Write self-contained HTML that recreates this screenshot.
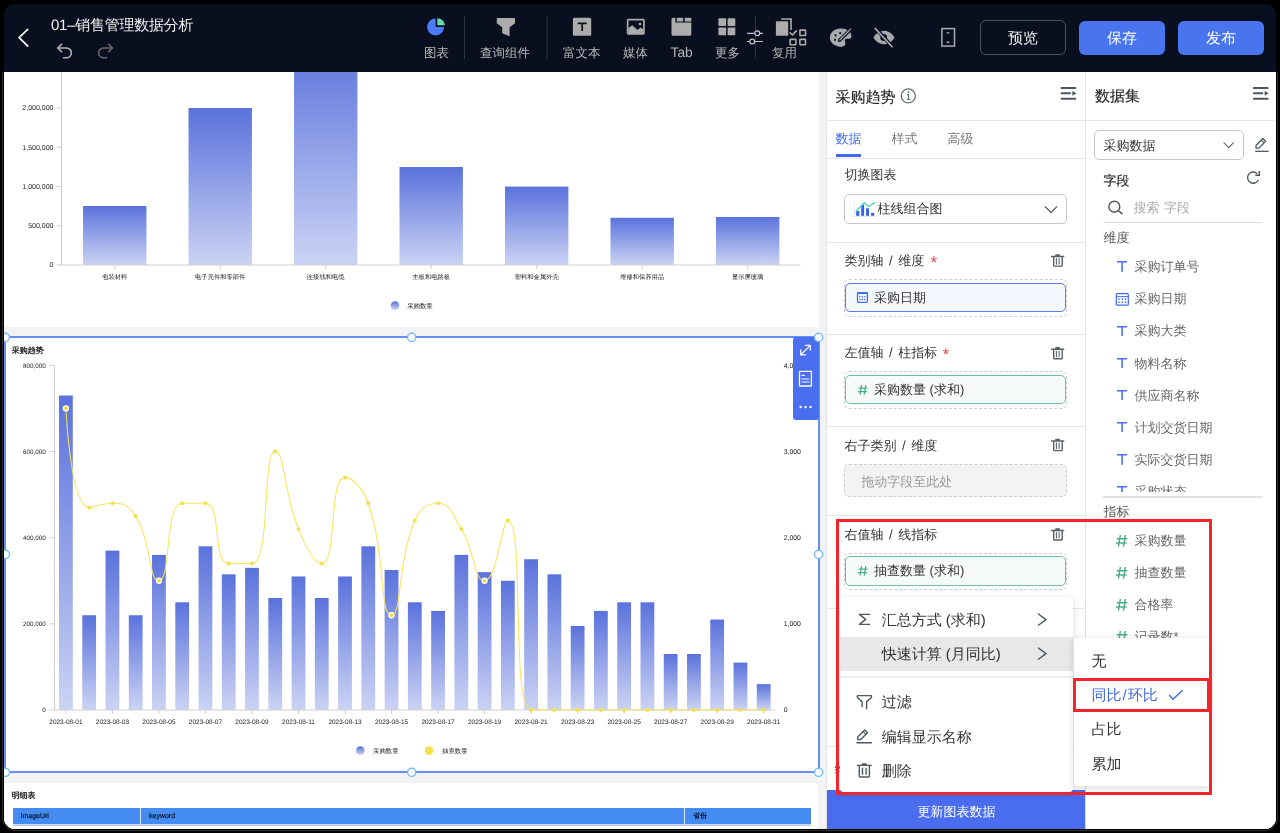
<!DOCTYPE html>
<html><head><meta charset="utf-8">
<style>
html,body{margin:0;padding:0;background:#000;width:1280px;height:833px;overflow:hidden}
body{font-family:"Liberation Sans",sans-serif;position:relative;text-rendering:geometricPrecision}
.abs{position:absolute}
#frame{position:absolute;left:4px;top:3.6px;width:1271.7px;height:825.2px;border-radius:11px;overflow:hidden;background:linear-gradient(#0a0f1f 0,#0a0f1f 60px,#fff 60px)}
#app{position:absolute;left:-4px;top:-3.6px;width:1280px;height:833px;will-change:transform}
.txt{position:absolute;white-space:nowrap;line-height:1}
</style></head><body>
<div id="frame"><div id="app">

  <!-- canvas -->
  <div class="abs" style="left:0;top:71.5px;width:826px;height:762px;background:#f2f3f5"></div>
  <div class="abs" style="left:0;top:71.5px;width:819px;height:255.5px;background:#fff"></div>
  <div class="abs" style="left:0;top:337px;width:819px;height:436px;background:#fff"></div>
  <div class="abs" style="left:0;top:782.5px;width:818px;height:60px;background:#fff"></div>
  <div class="abs" style="left:826px;top:71.5px;width:1px;height:762px;background:#e3e3e3"></div>

  <svg class="abs" style="left:0;top:0" width="1280" height="833" viewBox="0 0 1280 833">
<defs>
<linearGradient id="g1" x1="0" y1="0" x2="0" y2="1"><stop offset="0" stop-color="#5a72dc"/><stop offset="1" stop-color="#cbd3f4"/></linearGradient>
<linearGradient id="g2" x1="0" y1="0" x2="0" y2="1"><stop offset="0" stop-color="#5a72dc"/><stop offset="1" stop-color="#cbd3f4"/></linearGradient>
</defs>
<g font-family='"Liberation Sans", sans-serif' text-rendering='geometricPrecision'>
<line x1="56.5" y1="265.0" x2="62" y2="265.0" stroke="#cfcfcf" stroke-width="1"/><text x="53.5" y="267.4" font-size="7" fill="#222" font-weight="normal" text-anchor="end" >0</text><line x1="56.5" y1="225.75" x2="62" y2="225.75" stroke="#cfcfcf" stroke-width="1"/><text x="53.5" y="228.15" font-size="7" fill="#222" font-weight="normal" text-anchor="end" >500,000</text><line x1="56.5" y1="186.5" x2="62" y2="186.5" stroke="#cfcfcf" stroke-width="1"/><text x="53.5" y="188.9" font-size="7" fill="#222" font-weight="normal" text-anchor="end" >1,000,000</text><line x1="56.5" y1="147.25" x2="62" y2="147.25" stroke="#cfcfcf" stroke-width="1"/><text x="53.5" y="149.65" font-size="7" fill="#222" font-weight="normal" text-anchor="end" >1,500,000</text><line x1="56.5" y1="108.0" x2="62" y2="108.0" stroke="#cfcfcf" stroke-width="1"/><text x="53.5" y="110.4" font-size="7" fill="#222" font-weight="normal" text-anchor="end" >2,000,000</text><line x1="56.5" y1="68.75" x2="62" y2="68.75" stroke="#cfcfcf" stroke-width="1"/><text x="53.5" y="71.15" font-size="7" fill="#222" font-weight="normal" text-anchor="end" >2,500,000</text><line x1="61.5" y1="60" x2="61.5" y2="265" stroke="#cdcdcd" stroke-width="1"/><rect x="83.04" y="206" width="63.4" height="59" fill="url(#g1)"/><line x1="114.74" y1="265" x2="114.74" y2="269" stroke="#cfcfcf" stroke-width="1"/><text x="114.74" y="279.3" font-size="6.3" fill="#222" font-weight="normal" text-anchor="middle" >包装材料</text><rect x="188.53" y="108" width="63.4" height="157" fill="url(#g1)"/><line x1="220.23" y1="265" x2="220.23" y2="269" stroke="#cfcfcf" stroke-width="1"/><text x="220.23" y="279.3" font-size="6.3" fill="#222" font-weight="normal" text-anchor="middle" >电子元件和零部件</text><rect x="294.01" y="40" width="63.4" height="225" fill="url(#g1)"/><line x1="325.71" y1="265" x2="325.71" y2="269" stroke="#cfcfcf" stroke-width="1"/><text x="325.71" y="279.3" font-size="6.3" fill="#222" font-weight="normal" text-anchor="middle" >连接线和电缆</text><rect x="399.50" y="167" width="63.4" height="98" fill="url(#g1)"/><line x1="431.20" y1="265" x2="431.20" y2="269" stroke="#cfcfcf" stroke-width="1"/><text x="431.20" y="279.3" font-size="6.3" fill="#222" font-weight="normal" text-anchor="middle" >主板和电路板</text><rect x="504.99" y="186.6" width="63.4" height="78.4" fill="url(#g1)"/><line x1="536.69" y1="265" x2="536.69" y2="269" stroke="#cfcfcf" stroke-width="1"/><text x="536.69" y="279.3" font-size="6.3" fill="#222" font-weight="normal" text-anchor="middle" >塑料和金属外壳</text><rect x="610.47" y="217.8" width="63.4" height="47.19999999999999" fill="url(#g1)"/><line x1="642.17" y1="265" x2="642.17" y2="269" stroke="#cfcfcf" stroke-width="1"/><text x="642.17" y="279.3" font-size="6.3" fill="#222" font-weight="normal" text-anchor="middle" >维修和保养用品</text><rect x="715.96" y="217" width="63.4" height="48" fill="url(#g1)"/><line x1="747.66" y1="265" x2="747.66" y2="269" stroke="#cfcfcf" stroke-width="1"/><text x="747.66" y="279.3" font-size="6.3" fill="#222" font-weight="normal" text-anchor="middle" >显示屏玻璃</text><line x1="62" y1="265" x2="800.4" y2="265" stroke="#cfcfcf" stroke-width="1.2"/><circle cx="395" cy="305.6" r="4.3" fill="url(#g1)"/><text x="407.2" y="308" font-size="6.4" fill="#222" font-weight="normal" text-anchor="start" >采购数量</text>
<line x1="49.2" y1="710.00" x2="54.5" y2="710.00" stroke="#cfcfcf" stroke-width="1"/><text x="45.8" y="712.30" font-size="6.3" fill="#222" font-weight="normal" text-anchor="end" >0</text><text x="783.7" y="712.30" font-size="6.9" fill="#222" font-weight="normal" text-anchor="start" >0</text><line x1="49.2" y1="623.85" x2="54.5" y2="623.85" stroke="#cfcfcf" stroke-width="1"/><text x="45.8" y="626.15" font-size="6.3" fill="#222" font-weight="normal" text-anchor="end" >200,000</text><text x="783.7" y="626.15" font-size="6.9" fill="#222" font-weight="normal" text-anchor="start" >1,000</text><line x1="49.2" y1="537.70" x2="54.5" y2="537.70" stroke="#cfcfcf" stroke-width="1"/><text x="45.8" y="540.00" font-size="6.3" fill="#222" font-weight="normal" text-anchor="end" >400,000</text><text x="783.7" y="540.00" font-size="6.9" fill="#222" font-weight="normal" text-anchor="start" >2,000</text><line x1="49.2" y1="451.55" x2="54.5" y2="451.55" stroke="#cfcfcf" stroke-width="1"/><text x="45.8" y="453.85" font-size="6.3" fill="#222" font-weight="normal" text-anchor="end" >600,000</text><text x="783.7" y="453.85" font-size="6.9" fill="#222" font-weight="normal" text-anchor="start" >3,000</text><line x1="49.2" y1="365.40" x2="54.5" y2="365.40" stroke="#cfcfcf" stroke-width="1"/><text x="45.8" y="367.70" font-size="6.3" fill="#222" font-weight="normal" text-anchor="end" >800,000</text><text x="783.7" y="367.70" font-size="6.9" fill="#222" font-weight="normal" text-anchor="start" >4,000</text><line x1="54.5" y1="365.4" x2="54.5" y2="710" stroke="#cfcfcf" stroke-width="1"/><rect x="59.00" y="395.55" width="13.8" height="314.45" fill="url(#g2)"/><rect x="82.26" y="615.24" width="13.8" height="94.76" fill="url(#g2)"/><rect x="105.52" y="550.62" width="13.8" height="159.38" fill="url(#g2)"/><rect x="128.78" y="615.24" width="13.8" height="94.76" fill="url(#g2)"/><rect x="152.04" y="554.93" width="13.8" height="155.07" fill="url(#g2)"/><rect x="175.30" y="602.31" width="13.8" height="107.69" fill="url(#g2)"/><rect x="198.56" y="546.32" width="13.8" height="163.68" fill="url(#g2)"/><rect x="221.82" y="574.31" width="13.8" height="135.69" fill="url(#g2)"/><rect x="245.08" y="567.85" width="13.8" height="142.15" fill="url(#g2)"/><rect x="268.34" y="598.00" width="13.8" height="112.00" fill="url(#g2)"/><rect x="291.60" y="576.47" width="13.8" height="133.53" fill="url(#g2)"/><rect x="314.86" y="598.00" width="13.8" height="112.00" fill="url(#g2)"/><rect x="338.12" y="576.47" width="13.8" height="133.53" fill="url(#g2)"/><rect x="361.38" y="546.32" width="13.8" height="163.68" fill="url(#g2)"/><rect x="384.64" y="570.01" width="13.8" height="139.99" fill="url(#g2)"/><rect x="407.90" y="602.31" width="13.8" height="107.69" fill="url(#g2)"/><rect x="431.16" y="610.93" width="13.8" height="99.07" fill="url(#g2)"/><rect x="454.42" y="554.93" width="13.8" height="155.07" fill="url(#g2)"/><rect x="477.68" y="572.16" width="13.8" height="137.84" fill="url(#g2)"/><rect x="500.94" y="580.77" width="13.8" height="129.23" fill="url(#g2)"/><rect x="524.20" y="559.24" width="13.8" height="150.76" fill="url(#g2)"/><rect x="547.46" y="574.31" width="13.8" height="135.69" fill="url(#g2)"/><rect x="570.72" y="626.00" width="13.8" height="84.00" fill="url(#g2)"/><rect x="593.98" y="610.93" width="13.8" height="99.07" fill="url(#g2)"/><rect x="617.24" y="602.31" width="13.8" height="107.69" fill="url(#g2)"/><rect x="640.50" y="602.31" width="13.8" height="107.69" fill="url(#g2)"/><rect x="663.76" y="654.00" width="13.8" height="56.00" fill="url(#g2)"/><rect x="687.02" y="654.00" width="13.8" height="56.00" fill="url(#g2)"/><rect x="710.28" y="619.54" width="13.8" height="90.46" fill="url(#g2)"/><rect x="733.54" y="662.62" width="13.8" height="47.38" fill="url(#g2)"/><rect x="756.80" y="684.15" width="13.8" height="25.85" fill="url(#g2)"/><line x1="65.90" y1="710" x2="65.90" y2="714" stroke="#cfcfcf" stroke-width="1"/><text x="65.90" y="724.2" font-size="6.5" fill="#222" font-weight="normal" text-anchor="middle" >2023-08-01</text><line x1="112.42" y1="710" x2="112.42" y2="714" stroke="#cfcfcf" stroke-width="1"/><text x="112.42" y="724.2" font-size="6.5" fill="#222" font-weight="normal" text-anchor="middle" >2023-08-03</text><line x1="158.94" y1="710" x2="158.94" y2="714" stroke="#cfcfcf" stroke-width="1"/><text x="158.94" y="724.2" font-size="6.5" fill="#222" font-weight="normal" text-anchor="middle" >2023-08-05</text><line x1="205.46" y1="710" x2="205.46" y2="714" stroke="#cfcfcf" stroke-width="1"/><text x="205.46" y="724.2" font-size="6.5" fill="#222" font-weight="normal" text-anchor="middle" >2023-08-07</text><line x1="251.98" y1="710" x2="251.98" y2="714" stroke="#cfcfcf" stroke-width="1"/><text x="251.98" y="724.2" font-size="6.5" fill="#222" font-weight="normal" text-anchor="middle" >2023-08-09</text><line x1="298.50" y1="710" x2="298.50" y2="714" stroke="#cfcfcf" stroke-width="1"/><text x="298.50" y="724.2" font-size="6.5" fill="#222" font-weight="normal" text-anchor="middle" >2023-08-11</text><line x1="345.02" y1="710" x2="345.02" y2="714" stroke="#cfcfcf" stroke-width="1"/><text x="345.02" y="724.2" font-size="6.5" fill="#222" font-weight="normal" text-anchor="middle" >2023-08-13</text><line x1="391.54" y1="710" x2="391.54" y2="714" stroke="#cfcfcf" stroke-width="1"/><text x="391.54" y="724.2" font-size="6.5" fill="#222" font-weight="normal" text-anchor="middle" >2023-08-15</text><line x1="438.06" y1="710" x2="438.06" y2="714" stroke="#cfcfcf" stroke-width="1"/><text x="438.06" y="724.2" font-size="6.5" fill="#222" font-weight="normal" text-anchor="middle" >2023-08-17</text><line x1="484.58" y1="710" x2="484.58" y2="714" stroke="#cfcfcf" stroke-width="1"/><text x="484.58" y="724.2" font-size="6.5" fill="#222" font-weight="normal" text-anchor="middle" >2023-08-19</text><line x1="531.10" y1="710" x2="531.10" y2="714" stroke="#cfcfcf" stroke-width="1"/><text x="531.10" y="724.2" font-size="6.5" fill="#222" font-weight="normal" text-anchor="middle" >2023-08-21</text><line x1="577.62" y1="710" x2="577.62" y2="714" stroke="#cfcfcf" stroke-width="1"/><text x="577.62" y="724.2" font-size="6.5" fill="#222" font-weight="normal" text-anchor="middle" >2023-08-23</text><line x1="624.14" y1="710" x2="624.14" y2="714" stroke="#cfcfcf" stroke-width="1"/><text x="624.14" y="724.2" font-size="6.5" fill="#222" font-weight="normal" text-anchor="middle" >2023-08-25</text><line x1="670.66" y1="710" x2="670.66" y2="714" stroke="#cfcfcf" stroke-width="1"/><text x="670.66" y="724.2" font-size="6.5" fill="#222" font-weight="normal" text-anchor="middle" >2023-08-27</text><line x1="717.18" y1="710" x2="717.18" y2="714" stroke="#cfcfcf" stroke-width="1"/><text x="717.18" y="724.2" font-size="6.5" fill="#222" font-weight="normal" text-anchor="middle" >2023-08-29</text><line x1="763.70" y1="710" x2="763.70" y2="714" stroke="#cfcfcf" stroke-width="1"/><text x="763.70" y="724.2" font-size="6.5" fill="#222" font-weight="normal" text-anchor="middle" >2023-08-31</text><line x1="54.5" y1="710" x2="775.3" y2="710" stroke="#cfcfcf" stroke-width="1.2"/><path d="M65.90,408.47 C65.90,408.47 70.29,507.55 89.16,507.55 C93.55,507.55 101.47,503.24 112.42,503.24 C124.73,503.24 129.18,505.34 135.68,516.16 C152.44,544.10 148.26,580.77 158.94,580.77 C171.52,580.77 164.13,503.24 182.20,503.24 C187.39,503.24 199.30,503.24 205.46,503.24 C222.56,503.24 211.62,563.54 228.72,563.54 C234.88,563.54 248.05,563.54 251.98,563.54 C271.31,563.54 261.62,451.55 275.24,451.55 C284.88,451.55 283.13,492.09 298.50,529.09 C306.39,548.09 314.37,563.54 321.76,563.54 C337.63,563.54 328.28,477.39 345.02,477.39 C351.54,477.39 362.86,487.17 368.28,503.24 C386.12,556.09 378.99,615.24 391.54,615.24 C402.25,615.24 396.86,563.66 414.80,520.47 C420.12,507.66 427.49,503.24 438.06,503.24 C450.75,503.24 452.48,514.35 461.32,529.09 C475.74,553.11 473.71,580.77 484.58,580.77 C496.97,580.77 501.96,520.47 507.84,520.47 C525.22,520.47 510.37,710.00 531.10,710.00 C533.63,710.00 542.73,710.00 554.36,710.00 C565.99,710.00 565.99,710.00 577.62,710.00 C589.25,710.00 589.25,710.00 600.88,710.00 C612.51,710.00 612.51,710.00 624.14,710.00 C635.77,710.00 635.77,710.00 647.40,710.00 C659.03,710.00 659.03,710.00 670.66,710.00 C682.29,710.00 682.29,710.00 693.92,710.00 C705.55,710.00 705.55,710.00 717.18,710.00 C728.81,710.00 728.81,710.00 740.44,710.00 C752.07,710.00 763.70,710.00 763.70,710.00" fill="none" stroke="#f9e35a" stroke-width="1.05"/><circle cx="65.90" cy="408.47" r="2.5" fill="#f0dc2a" stroke="#fff" stroke-width="1.3"/><circle cx="89.16" cy="507.55" r="2" fill="#f7df4b"/><circle cx="112.42" cy="503.24" r="2" fill="#f7df4b"/><circle cx="135.68" cy="516.16" r="2" fill="#f7df4b"/><circle cx="158.94" cy="580.77" r="2.5" fill="#f0dc2a" stroke="#fff" stroke-width="1.3"/><circle cx="182.20" cy="503.24" r="2" fill="#f7df4b"/><circle cx="205.46" cy="503.24" r="2" fill="#f7df4b"/><circle cx="228.72" cy="563.54" r="2" fill="#f7df4b"/><circle cx="251.98" cy="563.54" r="2" fill="#f7df4b"/><circle cx="275.24" cy="451.55" r="2" fill="#f7df4b"/><circle cx="298.50" cy="529.09" r="2" fill="#f7df4b"/><circle cx="321.76" cy="563.54" r="2" fill="#f7df4b"/><circle cx="345.02" cy="477.39" r="2" fill="#f7df4b"/><circle cx="368.28" cy="503.24" r="2" fill="#f7df4b"/><circle cx="391.54" cy="615.24" r="2.5" fill="#f0dc2a" stroke="#fff" stroke-width="1.3"/><circle cx="414.80" cy="520.47" r="2" fill="#f7df4b"/><circle cx="438.06" cy="503.24" r="2" fill="#f7df4b"/><circle cx="461.32" cy="529.09" r="2" fill="#f7df4b"/><circle cx="484.58" cy="580.77" r="2.5" fill="#f0dc2a" stroke="#fff" stroke-width="1.3"/><circle cx="507.84" cy="520.47" r="2" fill="#f7df4b"/><circle cx="531.10" cy="710.00" r="2" fill="#f7df4b"/><circle cx="554.36" cy="710.00" r="2" fill="#f7df4b"/><circle cx="577.62" cy="710.00" r="2" fill="#f7df4b"/><circle cx="600.88" cy="710.00" r="2" fill="#f7df4b"/><circle cx="624.14" cy="710.00" r="2" fill="#f7df4b"/><circle cx="647.40" cy="710.00" r="2" fill="#f7df4b"/><circle cx="670.66" cy="710.00" r="2" fill="#f7df4b"/><circle cx="693.92" cy="710.00" r="2" fill="#f7df4b"/><circle cx="717.18" cy="710.00" r="2" fill="#f7df4b"/><circle cx="740.44" cy="710.00" r="2" fill="#f7df4b"/><circle cx="763.70" cy="710.00" r="2" fill="#f7df4b"/><circle cx="360.3" cy="750.6" r="4.3" fill="url(#g1)"/><text x="373" y="753" font-size="6.4" fill="#222" font-weight="normal" text-anchor="start" >采购数量</text><circle cx="429" cy="750.6" r="4.3" fill="#f6e14a"/><text x="442" y="753" font-size="6.4" fill="#222" font-weight="normal" text-anchor="start" >抽查数量</text><text x="11.8" y="353" font-size="8" fill="#222" font-weight="bold" text-anchor="start" >采购趋势</text>
</g></svg>
  <!-- top bar -->
  <div class="abs" style="left:0;top:0;width:1280px;height:71.5px;background:#0a0f1f"></div>
    <svg class="abs" style="left:0;top:0" width="1280" height="72" viewBox="0 0 1280 72">
    <polyline points="27.7,29.4 19.1,37.7 27.7,46" fill="none" stroke="#f2f2f2" stroke-width="1.75" stroke-linecap="round" stroke-linejoin="round"/>
    <!-- undo -->
    <g fill="none" stroke="#b4b4b4" stroke-width="1.6" stroke-linecap="round" stroke-linejoin="round">
      <path d="M61.6,44.2 L57.8,48 L61.6,51.8"/>
      <path d="M58.2,48 H66.4 A4.9,4.9 0 0 1 66.4,57.8 H63.5"/>
    </g>
    <g fill="none" stroke="#6a6a6a" stroke-width="1.6" stroke-linecap="round" stroke-linejoin="round">
      <path d="M108.6,44.2 L112.4,48 L108.6,51.8"/>
      <path d="M112,48 H103.6 A4.9,4.9 0 0 0 103.6,57.8 H106.6"/>
    </g>
    <!-- pie -->
    <path d="M435.6,18.5 A8.5,8.5 0 1 0 444.1,27 L435.6,27 Z" fill="#4a7cf5"/>
    <path d="M437.3,18.2 A7.4,7.4 0 0 1 444.7,25.2 L437.3,25.2 Z" fill="#62dbb6"/>
    <line x1="464.5" y1="16" x2="464.5" y2="59" stroke="#2f3441" stroke-width="1"/>
    <!-- filter -->
    <path d="M497.8,18 H514 A1,1 0 0 1 515,19 V23.3 L509.6,27.3 V36.2 L502.2,33.2 V27.3 L496.8,23.3 V19 A1,1 0 0 1 497.8,18 Z" fill="#acacac"/>
    <line x1="547" y1="16" x2="547" y2="59" stroke="#2f3441" stroke-width="1"/>
    <!-- T -->
    <rect x="572.9" y="17.8" width="18.3" height="18" rx="1.6" fill="#acacac"/>
    <path d="M577.8,23.3 H586.6 M582.2,23.3 V31" stroke="#0a0f1f" stroke-width="1.7"/>
    <!-- image -->
    <rect x="627.65" y="19.65" width="16.3" height="14.3" rx="0.8" fill="none" stroke="#acacac" stroke-width="1.7"/>
    <path d="M628.4,28.1 L632.2,25.2 L637.5,29.9 L640.6,27.5 L643.2,29.3 V34 H628.4 Z" fill="#acacac"/>
    <circle cx="640" cy="24" r="1.3" fill="#acacac"/>
    <!-- tab -->
    <path d="M673,17.8 H675.4 V22.6 H691.3 V34.2 A1.5,1.5 0 0 1 689.8,35.7 H673 A1.5,1.5 0 0 1 671.5,34.2 V19.3 A1.5,1.5 0 0 1 673,17.8 Z" fill="#acacac"/>
    <rect x="676.8" y="17.8" width="6.3" height="3.7" fill="#acacac"/>
    <rect x="684.7" y="17.8" width="6.6" height="3.7" fill="#acacac"/>
    <!-- grid -->
    <rect x="718.4" y="18.2" width="7.7" height="7.7" rx="0.8" fill="#acacac"/>
    <rect x="727.6" y="18.2" width="7.7" height="7.7" rx="0.8" fill="#acacac"/>
    <rect x="718.4" y="27.6" width="7.7" height="7.7" rx="0.8" fill="#acacac"/>
    <rect x="727.6" y="27.6" width="7.7" height="7.7" rx="0.8" fill="#acacac"/>
    <line x1="755.4" y1="16" x2="755.4" y2="59" stroke="#2f3441" stroke-width="1"/>
    <!-- slider -->
    <g stroke="#c4c4c4" stroke-width="1.2" fill="#0a0f1f">
      <path d="M747,33.3 H754.8 M759.8,33.3 H762.9 M747,41.5 H749.7 M754.7,41.5 H762.9"/>
      <circle cx="757.3" cy="33.3" r="2.4"/>
      <circle cx="752.2" cy="41.5" r="2.4"/>
    </g>
    <!-- reuse -->
    <path d="M781.1,19 H791 V30" fill="none" stroke="#acacac" stroke-width="1.6"/>
    <rect x="775.9" y="21.2" width="12.3" height="14.5" rx="0.8" fill="#acacac"/>
    <path d="M789.7,32.4 L792.5,34.8 L796.8,30.4" fill="none" stroke="#acacac" stroke-width="1.6"/>
    <g fill="none" stroke="#acacac" stroke-width="1.6">
      <rect x="799.9" y="30.1" width="5.6" height="5.4" rx="0.5"/>
      <rect x="790.1" y="39.4" width="5.8" height="5.4" rx="0.5"/>
      <rect x="799.9" y="39.4" width="5.6" height="5.4" rx="0.5"/>
    </g>
    <!-- palette -->
    <path d="M840.5,28.6 C846.5,28.4 851.6,31.6 851.4,36.2 C851.3,38.6 849.4,39.2 847.5,38.8 C845.6,38.4 844.3,39.6 845,41.4 C846,43.6 845.2,46.6 840.6,46.7 C834.6,46.8 829.9,42.6 829.9,37.6 C829.9,32.4 834.6,28.7 840.5,28.6 Z" fill="#a8aab0"/>
    <circle cx="835.5" cy="35.3" r="1.1" fill="#0a0f1f"/>
    <circle cx="840.2" cy="33.2" r="1.1" fill="#0a0f1f"/>
    <circle cx="835" cy="39.8" r="1.1" fill="#0a0f1f"/>
    <path d="M851.5,28.6 L839.6,40.2" stroke="#0a0f1f" stroke-width="3.4" stroke-linecap="round"/>
    <path d="M850.8,28.9 L839.8,40" stroke="#a8aab0" stroke-width="1.2" stroke-linecap="round"/>
    <!-- eye off -->
    <path d="M873.3,37.5 C876.2,33 880,30.7 884,30.7 C888,30.7 891.9,33 894.5,37.5 C891.9,42 888,44.3 884,44.3 C880,44.3 876.2,42 873.3,37.5 Z" fill="#a8aab0"/>
    <circle cx="883.7" cy="37.5" r="3.4" fill="#0a0f1f"/>
    <path d="M875.7,28.4 L892.3,46.8" stroke="#0a0f1f" stroke-width="3.6"/>
    <path d="M875.3,28.6 L892,46.6" stroke="#a8aab0" stroke-width="1.7" stroke-linecap="square"/>
    <!-- mobile -->
    <rect x="941.9" y="28.6" width="12.6" height="17.5" fill="none" stroke="#a8aab0" stroke-width="1.5"/>
    <path d="M946.6,32.9 H949.4 M946.6,42.3 H949.4" stroke="#a8aab0" stroke-width="1.4"/>
  </svg>
  <div class="txt" style="left:51px;top:18px;font-size:15px;color:#f0f0f0;letter-spacing:-0.25px">01–销售管理数据分析</div>
  <div class="txt" style="left:424px;top:46.5px;font-size:12.5px;color:#b8b8b8;width:24px;text-align:center">图表</div>
  <div class="txt" style="left:480px;top:46.5px;font-size:12.5px;color:#b8b8b8">查询组件</div>
  <div class="txt" style="left:563px;top:46.5px;font-size:12.5px;color:#b8b8b8">富文本</div>
  <div class="txt" style="left:623px;top:46.5px;font-size:12.5px;color:#b8b8b8">媒体</div>
  <div class="txt" style="left:670.5px;top:46px;font-size:13.8px;color:#b8b8b8">Tab</div>
  <div class="txt" style="left:715px;top:46.5px;font-size:12.5px;color:#b8b8b8">更多</div>
  <div class="txt" style="left:772px;top:46.5px;font-size:12.5px;color:#b8b8b8">复用</div>
  <div class="abs" style="left:980.3px;top:20.3px;width:86.2px;height:34.5px;border:1.8px solid #4a4f5b;border-radius:6px;box-sizing:border-box"></div>
  <div class="txt" style="left:1008px;top:30.5px;font-size:15px;color:#f0f0f0">预览</div>
  <div class="abs" style="left:1079px;top:20.5px;width:86px;height:34.5px;background:#4874f0;border-radius:6px"></div>
  <div class="txt" style="left:1107px;top:30.5px;font-size:15px;color:#fff">保存</div>
  <div class="abs" style="left:1178px;top:20.5px;width:86px;height:34.5px;background:#4874f0;border-radius:6px"></div>
  <div class="txt" style="left:1206px;top:30.5px;font-size:15px;color:#fff">发布</div>


  <!-- middle panel -->
  <div class="abs" style="left:827px;top:71.5px;width:258px;height:762px;background:#fff"></div>
  <div class="abs" style="left:1085px;top:71.5px;width:1px;height:762px;background:#e3e3e3"></div>
  <!-- right panel -->
  <div class="abs" style="left:1086px;top:71.5px;width:190px;height:762px;background:#fff"></div>
    <!-- table card -->
  <div class="txt" style="left:11.5px;top:792px;font-size:8px;font-weight:bold;color:#222">明细表</div>
  <div class="abs" style="left:13px;top:808px;width:798px;height:15.6px;background:#448cf2"></div>
  <div class="abs" style="left:140px;top:808px;width:1px;height:16px;background:#dfe8f5"></div>
  <div class="abs" style="left:684px;top:808px;width:1px;height:16px;background:#dfe8f5"></div>
  <div class="abs" style="left:13px;top:823.6px;width:798px;height:1.4px;background:#d0dae6"></div>
  <div class="abs" style="left:13px;top:825px;width:798px;height:1px;background:#b3cff5"></div>
  <div class="txt" style="left:20.5px;top:813px;font-size:7px;color:#0d1526;-webkit-text-stroke:0.2px #0d1526">ImageUrl</div>
  <div class="txt" style="left:149px;top:813px;font-size:7px;color:#0d1526;-webkit-text-stroke:0.2px #0d1526">keyword</div>
  <div class="txt" style="left:693px;top:813px;font-size:7px;color:#0d1526;-webkit-text-stroke:0.2px #0d1526">省份</div>

  <!-- selection frame chart 2 -->
  <div class="abs" style="left:4px;top:336px;width:815.5px;height:437.2px;border:2px solid #6a8cf5;box-sizing:border-box"></div>
  <!-- floating toolbar -->
  <div class="abs" style="left:792.8px;top:337.2px;width:25.8px;height:82.6px;background:#4a6ef0;border-radius:3px"></div>
  <svg class="abs" style="left:790px;top:335px" width="32" height="90" viewBox="790 335 32 90">
    <g fill="none" stroke="#fff" stroke-width="1.3" stroke-linecap="round" stroke-linejoin="round">
      <path d="M801,354.6 L810,345.6 M805.5,345.3 H810.3 V350.1 M800.7,349.9 V354.9 H805.7"/>
      <rect x="799.5" y="371.4" width="11.9" height="14.6" rx="0.6"/>
      <path d="M802,375.4 H804.3 M802,379 H808.8 M802,382 H808.8" stroke-width="1.2"/>
    </g>
    <g fill="#fff"><circle cx="800.6" cy="407" r="1.2"/><circle cx="805.6" cy="407" r="1.2"/><circle cx="810.6" cy="407" r="1.2"/></g>
  </svg>

  <svg class="abs" style="left:0;top:0" width="830" height="833" viewBox="0 0 830 833">
    <g fill="#fff" stroke="#72bdf4" stroke-width="1.4">
      <circle cx="5.4" cy="337.4" r="4.1"/>
      <circle cx="411.7" cy="337.4" r="4.1"/>
      <circle cx="818.6" cy="337.4" r="4.1"/>
      <circle cx="5.4" cy="554.4" r="4.1"/>
      <circle cx="818.6" cy="554.4" r="4.1"/>
      <circle cx="5.4" cy="772.3" r="4.1"/>
      <circle cx="411.7" cy="772.3" r="4.1"/>
      <circle cx="818.6" cy="772.3" r="4.1"/>
    </g>
  </svg>
  <!-- ===== middle panel content ===== -->
  <div class="txt" style="left:835.5px;top:89.5px;font-size:15px;color:#222;-webkit-text-stroke:0.15px #222">采购趋势</div>
  <svg class="abs" style="left:826px;top:72px" width="259" height="750" viewBox="826 72 259 750">
    <circle cx="908.3" cy="95.9" r="7" fill="none" stroke="#6b6f78" stroke-width="1.3"/>
    <circle cx="908.4" cy="92.3" r="0.95" fill="#6b6f78"/>
    <path d="M906.9,94.7 H908.5 V99.4 M906.9,99.5 H910.4" stroke="#6b6f78" stroke-width="1.2" fill="none"/>
    <path d="M1061.6,88 H1075.3 M1061.6,93.3 H1070 M1061.6,98.7 H1075.3" stroke="#50555f" stroke-width="2.1" stroke-linecap="round" fill="none"/>
    <path d="M1072.4,90.9 L1076.4,93.3 L1072.4,95.7 Z" fill="#50555f"/>
  </svg>
  <div class="abs" style="left:827px;top:120px;width:258px;height:1px;background:#e6e6e6"></div>
  <div class="txt" style="left:835.5px;top:132px;font-size:13px;color:#3d6af0">数据</div>
  <div class="txt" style="left:891.5px;top:132px;font-size:13px;color:#777">样式</div>
  <div class="txt" style="left:947.5px;top:132px;font-size:13px;color:#777">高级</div>
  <div class="abs" style="left:835.5px;top:154.3px;width:25.5px;height:3px;background:#3d6af0"></div>
  <div class="abs" style="left:827px;top:157.5px;width:258px;height:1px;background:#e6e6e6"></div>

  <div class="txt" style="left:844.5px;top:168px;font-size:13px;color:#333">切换图表</div>
  <div class="abs" style="left:844.3px;top:194.3px;width:222.8px;height:29.7px;border:1px solid #c8c8c8;border-radius:5px;box-sizing:border-box"></div>
  <svg class="abs" style="left:850px;top:198px" width="30" height="22" viewBox="850 198 30 22">
    <path d="M854.5,201.2 V216.6 H876" fill="none" stroke="#e2e4ea" stroke-width="0.8"/>
    <rect x="856.2" y="211" width="3.1" height="4.8" fill="#3060f5"/>
    <rect x="861.2" y="204.8" width="2.9" height="11" fill="#3060f5"/>
    <rect x="866.1" y="208.3" width="2.9" height="7.5" fill="#3060f5"/>
    <rect x="871.1" y="212.9" width="3.1" height="2.9" fill="#3060f5"/>
    <path d="M856.1,211.3 L864.1,202.7 L868.4,206.5 L874.7,202.6" fill="none" stroke="#52d1ae" stroke-width="1.3" stroke-linejoin="round" stroke-linecap="round"/>
  </svg>
  <div class="txt" style="left:877.5px;top:202px;font-size:13px;color:#333">柱线组合图</div>
  <svg class="abs" style="left:1040px;top:200px" width="20" height="20" viewBox="1040 200 20 20">
    <polyline points="1045,206.4 1051,212.6 1057,206.4" fill="none" stroke="#555" stroke-width="1.3"/>
  </svg>
  <div class="abs" style="left:827px;top:241.5px;width:258px;height:1px;background:#e6e6e6"></div>

  <!-- section: 类别轴 -->
  <div class="txt" style="left:844.5px;top:254px;font-size:13px;color:#333" >类别轴<span style="margin:0 5.5px">/</span>维度</div>
  <div class="txt" style="left:930.5px;top:254px;font-size:17px;color:#e5484d">*</div>
  <div class="abs" style="left:844.2px;top:279px;width:222.4px;height:37.7px;border:1px dashed #cfcfcf;border-radius:5px;box-sizing:border-box"></div>
  <div class="abs" style="left:845.4px;top:282.5px;width:220.5px;height:29.1px;border:1.5px solid #5b7cf0;background:#f5f7fe;border-radius:5px;box-sizing:border-box"></div>
  <div class="txt" style="left:874px;top:290.5px;font-size:13px;color:#333">采购日期</div>
  <!-- section: 左值轴 -->
  <div class="abs" style="left:827px;top:334px;width:258px;height:1px;background:#e6e6e6"></div>
  <div class="txt" style="left:844.5px;top:346px;font-size:13px;color:#333">左值轴<span style="margin:0 5.5px">/</span>柱指标</div>
  <div class="txt" style="left:942.5px;top:346px;font-size:17px;color:#e5484d">*</div>
  <div class="abs" style="left:844.2px;top:371.4px;width:222.4px;height:37.6px;border:1px dashed #cfcfcf;border-radius:5px;box-sizing:border-box"></div>
  <div class="abs" style="left:845.4px;top:374.8px;width:220.5px;height:29.7px;border:1.5px solid #6cbfa5;background:#f6fbf9;border-radius:5px;box-sizing:border-box"></div>
  <svg class="abs" style="left:856.5px;top:384.0px" width="11.5" height="11.6" viewBox="-1 -1 11.50 11.60"><path d="M3.61,0 L2.09,9.60 M7.79,0 L6.27,9.60 M0.57,3.07 H9.50 M0,6.53 H8.93" stroke="#4fae8d" stroke-width="1.3" fill="none"/></svg>
  <div class="txt" style="left:874px;top:383px;font-size:13px;color:#333">采购数量 (求和)</div>
  <!-- section: 右子类别 -->
  <div class="abs" style="left:827px;top:426px;width:258px;height:1px;background:#e6e6e6"></div>
  <div class="txt" style="left:844.5px;top:438.5px;font-size:13px;color:#333">右子类别<span style="margin:0 5.5px">/</span>维度</div>
  <div class="abs" style="left:844.2px;top:464.3px;width:222.8px;height:33px;border:1px dashed #cfcfcf;background:#f3f3f3;border-radius:5px;box-sizing:border-box"></div>
  <div class="txt" style="left:861.3px;top:474.5px;font-size:13px;color:#9a9a9a">拖动字段至此处</div>
  <!-- section: 右值轴 -->
  <div class="abs" style="left:827px;top:515px;width:258px;height:1px;background:#e6e6e6"></div>
  <div class="txt" style="left:844.5px;top:527.5px;font-size:13px;color:#333">右值轴<span style="margin:0 5.5px">/</span>线指标</div>
  <div class="abs" style="left:844.2px;top:553.2px;width:222.4px;height:37px;border:1px dashed #cfcfcf;border-radius:5px;box-sizing:border-box"></div>
  <div class="abs" style="left:845.4px;top:556.4px;width:220.5px;height:29.2px;border:1.5px solid #6cbfa5;background:#f6fbf9;border-radius:5px;box-sizing:border-box"></div>
  <svg class="abs" style="left:856.5px;top:565.2px" width="11.5" height="11.6" viewBox="-1 -1 11.50 11.60"><path d="M3.61,0 L2.09,9.60 M7.79,0 L6.27,9.60 M0.57,3.07 H9.50 M0,6.53 H8.93" stroke="#4fae8d" stroke-width="1.3" fill="none"/></svg>
  <div class="txt" style="left:874px;top:564px;font-size:13px;color:#333">抽查数量 (求和)</div>
  <div class="abs" style="left:827px;top:607.5px;width:258px;height:1px;background:#e6e6e6"></div>
  <div class="abs" style="left:827px;top:746px;width:258px;height:1px;background:#e6e6e6"></div>
  <div class="txt" style="left:834.5px;top:762px;font-size:13px;color:#333">维</div>
  <!-- trash icons -->
  <svg class="abs" style="left:1045px;top:250px" width="25" height="300" viewBox="1045 250 25 300">
    <defs><g id="trash"><path d="M-6.2,-0.1 H6" fill="none" stroke="#5c6068" stroke-width="1.5" stroke-linecap="round"/><rect x="-2.55" y="-2.3" width="4.9" height="2.2" rx="0.9" fill="#5c6068"/><path d="M-4,0 V8.7 Q-4,9.5 -3.2,9.5 H3.7 Q4.5,9.5 4.5,8.7 V0" fill="none" stroke="#5c6068" stroke-width="1.4"/><path d="M-1.3,1.9 V7.5 M1.4,1.9 V7.5" fill="none" stroke="#5c6068" stroke-width="1.1" stroke-linecap="round"/></g></defs>
    <use href="#trash" x="1057.7" y="256.6"/>
    <use href="#trash" x="1057.7" y="349.3"/>
    <use href="#trash" x="1057.7" y="441.1"/>
    <use href="#trash" x="1057.7" y="530.5"/>
  </svg>
  <svg class="abs" style="left:850px;top:285px" width="25" height="25" viewBox="850 285 25 25">
    <rect x="857.5" y="292.5" width="9.9" height="9.8" rx="1.3" fill="none" stroke="#3b6ef5" stroke-width="1.25"/>
    <rect x="857.2" y="292" width="10.5" height="2.1" rx="1" fill="#3b6ef5"/>
    <g fill="#3b6ef5"><circle cx="859.8" cy="296.7" r="0.75"/><circle cx="862.4" cy="296.7" r="0.75"/><circle cx="864.9" cy="296.7" r="0.75"/><circle cx="859.8" cy="299.4" r="0.75"/><circle cx="862.4" cy="299.4" r="0.75"/><circle cx="864.9" cy="299.4" r="0.75"/></g>
  </svg>

  <!-- update button -->
  <div class="abs" style="left:827px;top:790px;width:258px;height:41px;background:#4a6df0"></div>
  <div class="txt" style="left:917.5px;top:804.5px;font-size:13px;color:#fff">更新图表数据</div>

  <!-- ===== right panel content ===== -->
  <div class="txt" style="left:1095px;top:88.5px;font-size:15px;color:#222;-webkit-text-stroke:0.15px #222">数据集</div>
  <svg class="abs" style="left:1086px;top:72px" width="190" height="600" viewBox="1086 72 190 600">
    <path d="M1253.9,88 H1267.6 M1253.9,93.3 H1262.3 M1253.9,98.7 H1267.6" stroke="#50555f" stroke-width="2.1" stroke-linecap="round" fill="none"/>
    <path d="M1264.7,90.9 L1268.7,93.3 L1264.7,95.7 Z" fill="#50555f"/>
    <polyline points="1223.6,142.4 1228.7,147.6 1233.8,142.4" fill="none" stroke="#666" stroke-width="1.1"/>
    <path d="M1255.9,148.1 L1256.1,145.3 L1262.9,138.5 L1265.7,141.3 L1258.9,148.1 Z" fill="none" stroke="#50555f" stroke-width="1.3" stroke-linejoin="round"/>
    <path d="M1261.3,140.1 L1264.1,142.9" stroke="#50555f" stroke-width="1.1"/>
    <path d="M1255.2,151.3 H1268.6" stroke="#50555f" stroke-width="1.3"/>
    <path d="M1257.16,173.64 A5.6,5.6 0 1 0 1258.28,179.97" fill="none" stroke="#50555f" stroke-width="1.4"/>
    <path d="M1259.3,171 V175.3 H1255.3" fill="none" stroke="#50555f" stroke-width="1.4"/>
    <circle cx="1114.3" cy="206.7" r="5.5" fill="none" stroke="#555" stroke-width="1.4"/>
    <path d="M1118.3,210.7 L1122.5,214.1" stroke="#555" stroke-width="1.5"/>
  </svg>
  <div class="abs" style="left:1086px;top:120px;width:189px;height:1px;background:#e6e6e6"></div>
  <div class="abs" style="left:1094.3px;top:130.2px;width:150.1px;height:29.8px;border:1px solid #c4c7ce;border-radius:5px;box-sizing:border-box"></div>
  <div class="txt" style="left:1103.5px;top:138.5px;font-size:13px;color:#333">采购数据</div>
  <div class="txt" style="left:1103.5px;top:173.5px;font-size:13px;color:#222;-webkit-text-stroke:0.15px #222">字段</div>
  <div class="txt" style="left:1133.5px;top:200.5px;font-size:13px;color:#aaa;word-spacing:1px">搜索 字段</div>
  <div class="abs" style="left:1103px;top:221.5px;width:158.5px;height:1px;background:#dedede"></div>
  <div class="txt" style="left:1103.5px;top:231px;font-size:13px;color:#555">维度</div>
  <div class="abs" style="left:1086px;top:250px;width:188px;height:242.2px;overflow:hidden"><div class="abs" style="left:-1086px;top:-250px;width:1280px;height:833px"><svg class="abs" style="left:1116.8px;top:261.3px" width="10.2" height="10.7" viewBox="0 0 10.20 10.70"><path d="M0,0.80 H10.20 M5.10,0.80 V10.70" stroke="#4a6ef0" stroke-width="1.6" fill="none"/></svg><div class="txt" style="left:1134.4px;top:260.2px;font-size:13px;color:#666">采购订单号</div><svg class="abs" style="left:1112px;top:289.5px" width="20" height="18" viewBox="0 0 20 18"><rect x="4.3" y="3.6" width="12" height="11.6" rx="1" fill="none" stroke="#4a6ef0" stroke-width="1.3"/><path d="M4.3,6.6 H16.3" stroke="#4a6ef0" stroke-width="1"/><g fill="#4a6ef0"><rect x="6.3" y="8.4" width="1.5" height="1.5"/><rect x="9.5" y="8.4" width="1.5" height="1.5"/><rect x="12.7" y="8.4" width="1.5" height="1.5"/><rect x="6.3" y="11.5" width="1.5" height="1.5"/><rect x="9.5" y="11.5" width="1.5" height="1.5"/><rect x="12.7" y="11.5" width="1.5" height="1.5"/></g></svg><div class="txt" style="left:1134.4px;top:292.3px;font-size:13px;color:#666">采购日期</div><svg class="abs" style="left:1116.8px;top:325.5px" width="10.2" height="10.7" viewBox="0 0 10.20 10.70"><path d="M0,0.80 H10.20 M5.10,0.80 V10.70" stroke="#4a6ef0" stroke-width="1.6" fill="none"/></svg><div class="txt" style="left:1134.4px;top:324.4px;font-size:13px;color:#666">采购大类</div><svg class="abs" style="left:1116.8px;top:357.6px" width="10.2" height="10.7" viewBox="0 0 10.20 10.70"><path d="M0,0.80 H10.20 M5.10,0.80 V10.70" stroke="#4a6ef0" stroke-width="1.6" fill="none"/></svg><div class="txt" style="left:1134.4px;top:356.5px;font-size:13px;color:#666">物料名称</div><svg class="abs" style="left:1116.8px;top:389.7px" width="10.2" height="10.7" viewBox="0 0 10.20 10.70"><path d="M0,0.80 H10.20 M5.10,0.80 V10.70" stroke="#4a6ef0" stroke-width="1.6" fill="none"/></svg><div class="txt" style="left:1134.4px;top:388.6px;font-size:13px;color:#666">供应商名称</div><svg class="abs" style="left:1116.8px;top:421.8px" width="10.2" height="10.7" viewBox="0 0 10.20 10.70"><path d="M0,0.80 H10.20 M5.10,0.80 V10.70" stroke="#4a6ef0" stroke-width="1.6" fill="none"/></svg><div class="txt" style="left:1134.4px;top:420.7px;font-size:13px;color:#666">计划交货日期</div><svg class="abs" style="left:1116.8px;top:453.9px" width="10.2" height="10.7" viewBox="0 0 10.20 10.70"><path d="M0,0.80 H10.20 M5.10,0.80 V10.70" stroke="#4a6ef0" stroke-width="1.6" fill="none"/></svg><div class="txt" style="left:1134.4px;top:452.8px;font-size:13px;color:#666">实际交货日期</div><svg class="abs" style="left:1116.8px;top:486.0px" width="10.2" height="10.7" viewBox="0 0 10.20 10.70"><path d="M0,0.80 H10.20 M5.10,0.80 V10.70" stroke="#4a6ef0" stroke-width="1.6" fill="none"/></svg><div class="txt" style="left:1134.4px;top:484.9px;font-size:13px;color:#666">采购状态</div></div></div><svg class="abs" style="left:1115.4px;top:534.1px" width="13.4" height="13.6" viewBox="-1 -1 13.40 13.60"><path d="M4.33,0 L2.51,11.60 M9.35,0 L7.52,11.60 M0.68,3.71 H11.40 M0,7.89 H10.72" stroke="#4fae8d" stroke-width="1.5" fill="none"/></svg><div class="txt" style="left:1134.4px;top:534.2px;font-size:13px;color:#666">采购数量</div><svg class="abs" style="left:1115.4px;top:566.1px" width="13.4" height="13.6" viewBox="-1 -1 13.40 13.60"><path d="M4.33,0 L2.51,11.60 M9.35,0 L7.52,11.60 M0.68,3.71 H11.40 M0,7.89 H10.72" stroke="#4fae8d" stroke-width="1.5" fill="none"/></svg><div class="txt" style="left:1134.4px;top:566.2px;font-size:13px;color:#666">抽查数量</div><svg class="abs" style="left:1115.4px;top:598.1px" width="13.4" height="13.6" viewBox="-1 -1 13.40 13.60"><path d="M4.33,0 L2.51,11.60 M9.35,0 L7.52,11.60 M0.68,3.71 H11.40 M0,7.89 H10.72" stroke="#4fae8d" stroke-width="1.5" fill="none"/></svg><div class="txt" style="left:1134.4px;top:598.2px;font-size:13px;color:#666">合格率</div><svg class="abs" style="left:1115.4px;top:630.1px" width="13.4" height="13.6" viewBox="-1 -1 13.40 13.60"><path d="M4.33,0 L2.51,11.60 M9.35,0 L7.52,11.60 M0.68,3.71 H11.40 M0,7.89 H10.72" stroke="#4fae8d" stroke-width="1.5" fill="none"/></svg><div class="txt" style="left:1134.4px;top:630.2px;font-size:13px;color:#666">记录数*</div>
  <div class="abs" style="left:1103px;top:496px;width:158.5px;height:1.5px;background:#e3e3e3"></div>
  <div class="txt" style="left:1103.5px;top:505px;font-size:13px;color:#555">指标</div>

  <!-- context menu -->
  <div class="abs" style="left:839.5px;top:597px;width:233px;height:195px;background:#fff;border-radius:4px;box-shadow:0 2px 8px rgba(0,0,0,0.15)"></div>
  <div class="abs" style="left:839.5px;top:636.7px;width:233px;height:34px;background:#e8e8e8"></div>
  <div class="abs" style="left:839.5px;top:676px;width:233px;height:2px;background:#efefef"></div>
  <div class="txt" style="left:881.7px;top:612.5px;font-size:15px;color:#333">汇总方式 (求和)</div>
  <div class="txt" style="left:881.7px;top:646.5px;font-size:15px;color:#333">快速计算 (月同比)</div>
  <div class="txt" style="left:881.7px;top:695px;font-size:15px;color:#333">过滤</div>
  <div class="txt" style="left:881.7px;top:730px;font-size:15px;color:#333">编辑显示名称</div>
  <div class="txt" style="left:881.7px;top:764px;font-size:15px;color:#333">删除</div>
  <svg class="abs" style="left:850px;top:605px" width="200" height="180" viewBox="850 605 200 180">
    <g fill="none" stroke="#50555f" stroke-width="1.4" stroke-linejoin="round" stroke-linecap="round">
      <path d="M869.6,614.4 H859.4 L865.7,619.4 L859.4,624.4 H869.6"/>
      <polyline points="1038.4,614 1046,619.6 1038.4,625.2"/>
      <polyline points="1038.4,648 1046,653.6 1038.4,659.2"/>
      <path d="M862.1,706.6 V701.6 L857.9,698 Q857.3,697.5 857.3,696.7 V696.3 Q857.3,695.6 858,695.6 H870.8 Q871.5,695.6 871.5,696.3 V696.7 Q871.5,697.5 870.9,698 L866.6,701.6 V708.7"/>
      <path d="M857.7,739.6 L857.9,736.8 L864.7,730 L867.5,732.8 L860.7,739.6 Z"/>
      <path d="M863.1,731.6 L865.9,734.4" stroke-width="1.1"/>
      <path d="M857,742.8 H871.4"/>
      <path d="M857.4,765.4 H871.2 M859.3,765.6 V776.3 Q859.3,777 860,777 H868.7 Q869.4,777 869.4,776.3 V765.6 M862.5,768.2 V774.3 M866.1,768.2 V774.3"/>
      <rect x="861.7" y="763.3" width="5.1" height="2.2" rx="0.9" fill="#50555f" stroke="none"/>
    </g>
  </svg>
  <!-- submenu -->
  <div class="abs" style="left:1074px;top:638.4px;width:136px;height:148px;background:#fff;border-radius:4px;box-shadow:0 2px 8px rgba(0,0,0,0.15)"></div>
  <div class="txt" style="left:1091.5px;top:653.5px;font-size:15px;color:#333">无</div>
  <div class="txt" style="left:1091.5px;top:687.5px;font-size:15px;color:#4169e1">同比<span style="margin:0 1px">/</span>环比</div>
  <svg class="abs" style="left:1165px;top:685px" width="22" height="20" viewBox="1165 685 22 20">
    <polyline points="1169.2,695 1173,699.3 1182.6,690.3" fill="none" stroke="#4169e1" stroke-width="1.4"/>
  </svg>
  <div class="txt" style="left:1091.5px;top:722px;font-size:15px;color:#333">占比</div>
  <div class="txt" style="left:1091.5px;top:757px;font-size:15px;color:#333">累加</div>

  <!-- red boxes -->
  <div class="abs" style="left:835.5px;top:518.6px;width:376.4px;height:276.7px;border:3px solid #f4262c;box-sizing:border-box"></div>
  <div class="abs" style="left:1073.4px;top:678px;width:136.4px;height:33.8px;border:3px solid #f4262c;box-sizing:border-box"></div>

</div></div>
<svg class="abs" style="left:0;top:0" width="1280" height="833"><path d="M2.4,71.5 V818 A12.6,12.6 0 0 0 15,830.6 H1265 A12.6,12.6 0 0 0 1277.6,818 V71.5" fill="none" stroke="#333" stroke-width="1"/></svg>
</body></html>
